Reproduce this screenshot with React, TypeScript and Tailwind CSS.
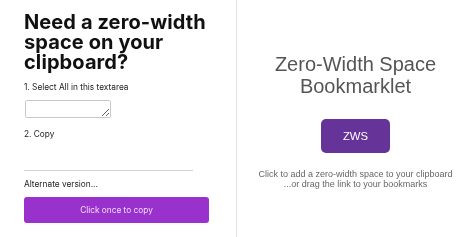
export default function App() {
  return (
    <div className="flex w-[474px] h-[237px] bg-white overflow-hidden">
      <div className="w-[236px] shrink-0 pl-6 pr-7 pt-[12px] font-['Inter',sans-serif] text-[#111]">
        <h1 className="text-[20px] leading-[20px] font-bold tracking-[0.1px]">
          Need a zero-width space on your clipboard?
        </h1>
        <p className="mt-[10px] text-[8.3px] leading-[10px] text-[#222]">1. Select All in this textarea</p>
        <textarea
          className="mt-[8px] ml-px block w-[86px] h-[18px] border border-[#c8c8c8] rounded-[2px] bg-white"
          defaultValue={"\u200b"}
        />
        <p className="mt-[11px] text-[8.3px] leading-[10px] text-[#222]">2. Copy</p>
        <div className="mt-[31px] w-[169px] h-px bg-[#d4d4d4]" />
        <p className="mt-[8px] text-[8.3px] leading-[10px] text-[#222]">Alternate version...</p>
        <button className="mt-[8px] w-[185px] h-[26px] rounded-[3px] bg-[#9932cc] text-[#f2dcf7] text-[8.3px]">
          Click once to copy
        </button>
      </div>
      <div className="w-px bg-[#e2e2e2]" />
      <div className="flex-1 h-[237px] pt-[53px] flex flex-col items-center font-['Liberation_Sans',Arial,sans-serif]">
        <h2 className="text-[20px] leading-[22px] text-[#555] text-center">
          Zero-Width Space
          <br />
          Bookmarklet
        </h2>
        <a
          href="#"
          className="mt-[22px] w-[69px] h-[34px] rounded-[5px] bg-[#663399] text-white text-[11.3px] flex items-center justify-center"
        >
          ZWS
        </a>
        <p className="mt-[17px] text-[9px] leading-[9.5px] text-[#666] text-center">
          Click to add a zero-width space to your clipboard
          <br />
          ...or drag the link to your bookmarks
        </p>
      </div>
    </div>
  );
}
